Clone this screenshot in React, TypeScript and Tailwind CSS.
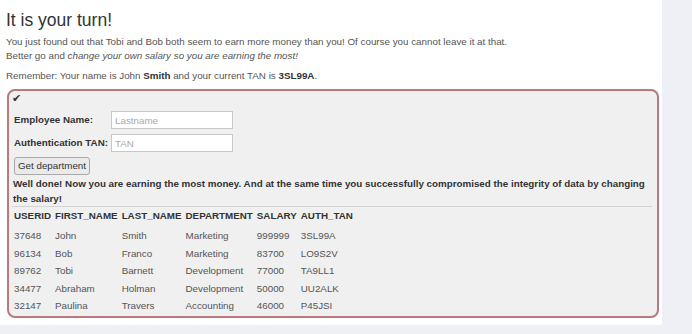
import React from "react";

const rows = [
  ["37648", "John", "Smith", "Marketing", "999999", "3SL99A"],
  ["96134", "Bob", "Franco", "Marketing", "83700", "LO9S2V"],
  ["89762", "Tobi", "Barnett", "Development", "77000", "TA9LL1"],
  ["34477", "Abraham", "Holman", "Development", "50000", "UU2ALK"],
  ["32147", "Paulina", "Travers", "Accounting", "46000", "P45JSI"],
];

const headers = ["USERID", "FIRST_NAME", "LAST_NAME", "DEPARTMENT", "SALARY", "AUTH_TAN"];

export default function App() {
  return (
    <div
      className="w-[692px] h-[334px] bg-[#eff0f5] overflow-hidden"
      style={{ fontFamily: '"Liberation Sans", Arial, sans-serif' }}
    >
      <div className="w-[662px] bg-white pb-[7px] rounded-br-[3px]">
        <h2 className="pl-[6px] pt-[9px] text-[17.5px] leading-[22px] text-[#333] font-normal">
          It is your turn!
        </h2>
        <div className="pl-[6px] mt-[4px] text-[9.8px] leading-[14px] text-[#555]">
          <p>
            You just found out that Tobi and Bob both seem to earn more money than you! Of course you cannot leave it at that.
            <br />
            Better go and <i>change your own salary so you are earning the most!</i>
          </p>
          <p className="mt-[6px]">
            Remember: Your name is John <b className="text-[#333]">Smith</b> and your current TAN is{" "}
            <b className="text-[#333]">3SL99A</b>.
          </p>
        </div>
        <div className="ml-[7px] mt-[6px] w-[652px] bg-[#f0f0f0] border-2 border-[#b87a7a] rounded-[8px] pl-[3px] pr-[4px] pb-[1px] text-[9.8px] text-[#333]">
          <div className="pt-[1px] text-[11px] leading-[12px] text-[#333]">✔</div>
          <div className="mt-[7px] flex flex-col gap-[5px]">
            <div className="flex items-center h-[18px]">
              <span className="w-[99px] pl-[2px] font-bold">Employee Name:</span>
              <input
                className="w-[122px] h-[18px] border border-[#c8c8c8] bg-white px-[3px] text-[9.8px] placeholder:text-[#aaa] outline-none"
                placeholder="Lastname"
              />
            </div>
            <div className="flex items-center h-[18px]">
              <span className="w-[99px] pl-[2px] font-bold">Authentication TAN:</span>
              <input
                className="w-[122px] h-[18px] border border-[#c8c8c8] bg-white px-[3px] text-[9.8px] placeholder:text-[#aaa] outline-none"
                placeholder="TAN"
              />
            </div>
            <div>
              <button className="ml-[2px] h-[18px] w-[76px] border border-[#aaa] rounded-[3px] bg-[#eaeaea] text-[9.8px] text-[#333] leading-none">
                Get department
              </button>
            </div>
          </div>
          <div className="font-bold leading-[15px] pl-[1px] mt-[1px]">
            Well done! Now you are earning the most money. And at the same time you successfully compromised the integrity of data by changing the salary!
          </div>
          <div className="mr-[1px] border-t border-[#d4d4d4]" />
          <table className="border-collapse text-[9.8px]">
            <thead>
              <tr>
                {headers.map((h) => (
                  <th key={h} className="text-left font-bold text-[#333] px-[2px] pt-[2px] pb-[5px] leading-[13px]">
                    {h}
                  </th>
                ))}
              </tr>
            </thead>
            <tbody>
              {rows.map((r) => (
                <tr key={r[0]}>
                  {r.map((c, i) => (
                    <td key={i} className="text-left text-[#555] px-[2px] py-[2px] leading-[13.5px]">
                      {c}
                    </td>
                  ))}
                </tr>
              ))}
            </tbody>
          </table>
        </div>
      </div>
    </div>
  );
}
